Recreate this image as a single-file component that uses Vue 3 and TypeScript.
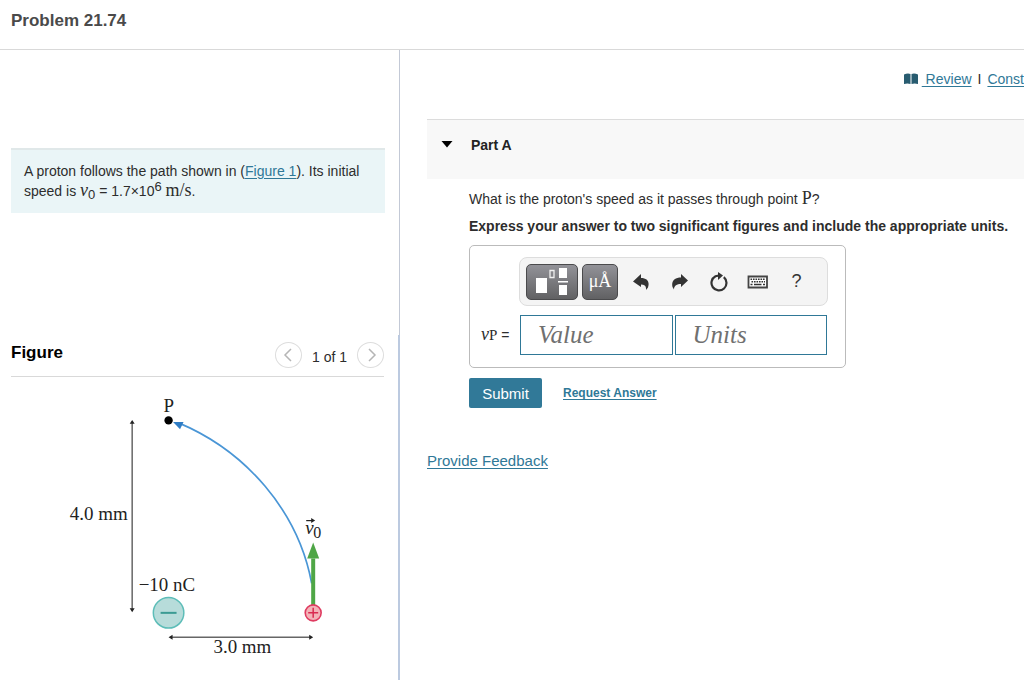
<script setup lang="ts">
import { ref } from 'vue'

const value = ref('')
const units = ref('')
const open = ref(true)
</script>

<template>
  <div class="page">
    <header class="top">
      <h1>Problem 21.74</h1>
    </header>
    <div class="columns">
      <aside class="left">
        <section class="intro">
          <p class="statement">
            A proton follows the path shown in (<a href="#figure">Figure 1</a>). Its initial
            speed is <span class="math"><i>v</i></span><sub>0</sub> = 1.7×10<sup>6</sup>&nbsp;<span class="math">m/s</span>.
          </p>
        </section>
        <section id="figure" class="figure">
          <div class="figure-head">
            <h2>Figure</h2>
            <div class="pager">
              <button type="button" aria-label="Previous figure">
                <svg width="12" height="14" viewBox="0 0 12 14"><path d="M9 1 3 7l6 6" /></svg>
              </button>
              <span>1 of 1</span>
              <button type="button" aria-label="Next figure">
                <svg width="12" height="14" viewBox="0 0 12 14"><path d="m4 1 6 6-6 6" /></svg>
              </button>
            </div>
          </div>
          <svg class="diagram" viewBox="0 0 374 300" role="img" aria-label="Path of the proton">
            <g stroke="#666" stroke-width="1.500" fill="none">
              <path d="M121.500 45V234" />
              <path d="M160 261H301" />
            </g>
            <g fill="#222">
              <path d="m121.500 43 2.500 4h-5zM121.500 236l2.500-4h-5zM158 261l4-2.500v5zM303 261l-4-2.500v5z" />
            </g>
            <path d="M168 46C235 74 288 134 301.500 207" fill="none" stroke="#4a96d6" stroke-width="1.700" />
            <path d="m162.500 45 10.500 0-3.500 7.500z" fill="#2f7cc4" />
            <circle cx="158" cy="43.500" r="4.200" fill="#000" />
            <path d="M303 229V182" stroke="#4fa646" stroke-width="4" />
            <path d="m303 166 6 16h-12z" fill="#4fa646" />
            <circle cx="158" cy="236.500" r="15.300" fill="#b7dcda" stroke="#5dbdb8" stroke-width="1.500" />
            <path d="M150 236.500h16" stroke="#3b9b93" stroke-width="2" />
            <circle cx="303" cy="236.500" r="8" fill="#f3b3b8" stroke="#df3b60" stroke-width="1.600" />
            <path d="M298 236.500h10M303 231.500v10" stroke="#d92b50" stroke-width="1.500" />
            <text x="153" y="35">P</text>
            <text x="59" y="143">4.0 mm</text>
            <text x="128" y="215">−10 nC</text>
            <text x="203" y="277">3.0 mm</text>
            <text x="295" y="157" class="vec">v</text>
            <text x="303" y="161" class="vec-sub">0</text>
            <path d="M296 144h6" stroke="#222" stroke-width="1.200" />
            <path d="m305 144-4-2.500v5z" fill="#222" />
          </svg>
        </section>
      </aside>
      <main class="right">
        <nav class="links">
          <a href="#review" class="review">
            <svg width="14" height="12" viewBox="0 0 14 12" aria-hidden="true">
              <path d="M0 1.500Q3.500 0 6.500 1v10Q3.500 10 0 11zM14 1.500Q10.500 0 7.500 1v10q3-1 6.500 0z" />
            </svg>
            <span>&nbsp;Review</span>
          </a>
          <span class="bar">I</span>
          <a href="#constants">Const</a>
        </nav>
        <button type="button" class="part" :aria-expanded="open" @click="open = !open">
          <svg width="12" height="7" viewBox="0 0 12 7" aria-hidden="true"><path d="M.5 0h11L6 6.500z" /></svg>
          <span>Part A</span>
        </button>
        <form v-show="open" class="answer" @submit.prevent>
          <p>What is the proton's speed as it passes through point <span class="math">P</span>?</p>
          <p class="hint">Express your answer to two significant figures and include the appropriate units.</p>
          <div class="box">
            <div class="tools">
              <button type="button" class="dark templates" aria-label="Templates">
                <svg width="34" height="27" viewBox="0 0 34 27">
                  <path d="M1 10h11v15H1zM24 0h8v10h-8zM24 17h8v10h-8zM23 13h10v1.500H23z" fill="#fff" />
                  <path d="M15 2.500h4v7h-4z" fill="none" stroke="#eee" stroke-width="1.300" />
                </svg>
              </button>
              <button type="button" class="dark symbols">μÅ</button>
              <button type="button" class="tool" aria-label="Undo">
                <svg width="16" height="16" viewBox="0 0 16 16"><path d="M0 7.500 8 0v4c6 0 9 3.500 7 9.500L13 16c.5-4-1.500-5.500-5-5.500V13z" /></svg>
              </button>
              <button type="button" class="tool" aria-label="Redo">
                <svg width="16" height="16" viewBox="0 0 16 16"><path d="M16 6.500 9 0v3.500c-6 0-10 3.500-8.500 9.500L2 15.500c0-4 3-5.500 7-5.500v3z" /></svg>
              </button>
              <button type="button" class="tool" aria-label="Reset">
                <svg width="18" height="20" viewBox="0 0 18 20">
                  <path d="M13.800 5.200A7.500 7.500 0 1 1 5.500 4.300L9 3.500" fill="none" stroke="#333" stroke-width="2.200" />
                  <path d="m8 0 5 3.500L8 8z" />
                </svg>
              </button>
              <button type="button" class="tool" aria-label="Keyboard shortcuts">
                <svg width="22" height="14" viewBox="0 0 22 14">
                  <path d="M1.500 1.500h18.500v11H1.500z" fill="#fff" stroke="#444" stroke-width="1.800" />
                  <path d="M3.500 4.200h14.500M4.500 6.800h13.500" fill="none" stroke="#333" stroke-width="1.600" stroke-dasharray="1.600 .9" />
                  <path d="M3.500 9.500h2M7 9.500h7.500M16 9.500h2" fill="none" stroke="#333" stroke-width="1.700" />
                </svg>
              </button>
              <button type="button" class="tool help" aria-label="Help">?</button>
            </div>
            <label for="value" class="symbol"><span class="math"><i>v</i><small>P</small></span> =</label>
            <div class="fields">
              <input id="value" v-model="value" type="text" placeholder="Value" />
              <input v-model="units" type="text" placeholder="Units" aria-label="Units" />
            </div>
          </div>
          <div class="actions">
            <button type="submit" class="submit">Submit</button>
            <a href="#answer">Request Answer</a>
          </div>
        </form>
        <a href="#feedback" class="feedback">Provide Feedback</a>
      </main>
    </div>
  </div>
</template>

<style>
body {
  margin: 0;
  background: #fff;
}
</style>

<style scoped>
* {
  box-sizing: border-box;
}
.page {
  display: flex;
  flex-direction: column;
  min-height: 100vh;
  font: 14px/20px "Liberation Sans", Arial, sans-serif;
  color: #2d2d2d;
}
h1,
h2,
p {
  margin: 0;
}
a {
  color: #2f7897;
  text-underline-offset: 2px;
}
button {
  font-family: inherit;
  cursor: pointer;
}
.math {
  font-family: "Liberation Serif", "Times New Roman", serif;
  font-size: 18px;
  line-height: 1;
}
.top {
  height: 50px;
  padding: 11px 11px 0;
  border-bottom: 1px solid #d9d9d9;
}
h1 {
  font-size: 17px;
  line-height: 20px;
  color: #4a4a4a;
}
h2 {
  font-size: 17px;
  line-height: 20px;
  color: #000;
}
.columns {
  display: flex;
  flex: 1;
}
.left {
  display: flex;
  flex-direction: column;
  flex: 0 0 400px;
}
.intro {
  height: 285px;
  padding: 98px 14px 0 11px;
  border-right: 1px solid #c3c9d6;
}
.statement {
  padding: 12px 13px;
  border-top: 2px solid #e0e8e9;
  background: #eaf5f7;
  line-height: 19px;
}
.statement sub,
.statement sup {
  font-size: 13px;
  line-height: 0;
}
.statement sub {
  vertical-align: -3px;
}
.statement sup {
  vertical-align: 5px;
}
.figure {
  flex: 1;
  padding: 7px 14px 0 11px;
  border-right: 2px solid #bccae0;
}
.figure-head {
  display: flex;
  justify-content: space-between;
  height: 35px;
  border-bottom: 1px solid #d9d9d9;
}
.figure-head h2 {
  padding-top: 1px;
}
.pager {
  display: flex;
  gap: 10px;
  font-size: 14px;
  line-height: 30px;
}
.pager button {
  display: grid;
  place-items: center;
  width: 27px;
  height: 26px;
  padding: 0;
  border: 1px solid #ddd;
  border-radius: 50%;
  background: #fff;
}
.pager path {
  fill: none;
  stroke: #b5b5b5;
  stroke-width: 1.5;
}
.diagram {
  display: block;
  width: 100%;
}
.diagram text {
  font: 19px "Liberation Serif", "Times New Roman", serif;
  fill: #222;
}
.diagram .vec {
  font-style: italic;
}
.diagram .vec-sub {
  font-size: 16px;
}
.right {
  flex: 1;
  min-width: 0;
  padding: 19px 0 0 27px;
}
.links {
  display: flex;
  justify-content: flex-end;
  height: 50px;
  white-space: nowrap;
}
.review {
  display: flex;
  gap: 4px;
  text-decoration: none;
}
.review svg {
  margin-top: 4px;
  fill: #285c70;
}
.review span {
  text-decoration: underline;
}
.bar {
  padding: 0 6px;
}
.part {
  display: flex;
  gap: 18px;
  width: 100%;
  height: 60px;
  padding: 15px 14px 0;
  border: 0;
  border-top: 1px solid #dcdcdc;
  background: #f8f8f8;
  color: #222;
  font-size: 14px;
  font-weight: 700;
  line-height: 20px;
  text-align: left;
}
.part svg {
  margin-top: 6px;
}
.answer {
  padding: 9px 0 0 42px;
}
.answer p {
  line-height: 22px;
}
.answer .hint {
  margin: 5px 0 8px;
  font-weight: 700;
}
.box {
  display: grid;
  grid-template-columns: 26px 309px;
  gap: 9px 12px;
  align-content: start;
  width: 377px;
  height: 123px;
  padding: 11px 0 0 11px;
  border: 1px solid #bbb;
  border-radius: 5px;
}
.tools {
  grid-column: 2;
  display: flex;
  align-items: center;
  height: 49px;
  padding: 0 6px;
  border: 1px solid #ddd;
  border-radius: 8px;
  background: #f4f4f4;
}
.dark {
  display: grid;
  place-items: center;
  height: 36px;
  padding: 0;
  border: 1px solid #4a4a4c;
  border-radius: 5px;
  background: linear-gradient(#929298, #616163);
  color: #fff;
}
.templates {
  width: 52px;
  margin-right: 4px;
}
.symbols {
  width: 36px;
  margin-right: 3px;
  font: 18px "Liberation Serif", "Times New Roman", serif;
}
.tool {
  display: grid;
  place-items: center;
  width: 39px;
  height: 36px;
  padding: 0;
  border: 0;
  background: none;
  color: #333;
}
.tool svg {
  fill: #333;
}
.help {
  font-size: 18px;
}
.symbol {
  grid-column: 1;
  align-self: center;
  white-space: nowrap;
}
.symbol small {
  font-size: 15px;
}
.fields {
  grid-column: 2;
  display: flex;
  gap: 2px;
  padding: 0 1px;
}
.fields input {
  flex: 1;
  min-width: 0;
  height: 40px;
  padding: 0 17px;
  border: 1px solid #2f7897;
  border-radius: 0;
  background: #fff;
  font: italic 25px "Liberation Serif", "Times New Roman", serif;
}
.fields input::placeholder {
  color: #707070;
  opacity: 1;
}
.actions {
  display: flex;
  align-items: center;
  gap: 21px;
  margin-top: 10px;
}
.actions a {
  font-size: 12px;
  font-weight: 700;
}
.submit {
  width: 73px;
  height: 30px;
  padding: 0;
  border: 0;
  border-radius: 2px;
  background: #317998;
  color: #fff;
  font-size: 15px;
}
.feedback {
  display: inline-block;
  margin-top: 43px;
  font-size: 15px;
}
</style>
